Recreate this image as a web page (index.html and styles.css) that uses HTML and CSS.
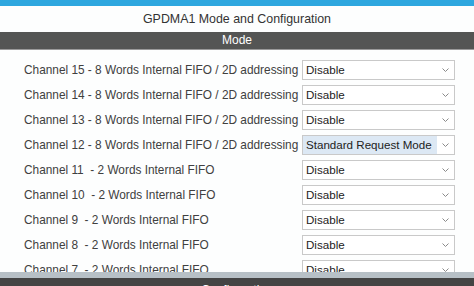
FILE: index.html
```html
<!DOCTYPE html>
<html lang="en">
<head>
    <meta charset="UTF-8">
    <meta name="viewport" content="width=device-width, initial-scale=1.0">
    <title>GPDMA1 Mode and Configuration</title>
    <link rel="stylesheet" href="styles.css">
</head>
<body>
    <div class="topbar"></div>
    <div class="title">GPDMA1 Mode and Configuration</div>
    <div class="section">Mode</div>

    <div class="rows">
        <div class="row">
            <span class="label">Channel 15 - 8 Words Internal FIFO / 2D addressing</span>
            <div class="select"><span class="value">Disable</span><svg class="chev" viewBox="0 0 7 4"><path d="M0.5 0.5 L3.5 3.5 L6.5 0.5"/></svg></div>
        </div>
        <div class="row">
            <span class="label">Channel 14 - 8 Words Internal FIFO / 2D addressing</span>
            <div class="select"><span class="value">Disable</span><svg class="chev" viewBox="0 0 7 4"><path d="M0.5 0.5 L3.5 3.5 L6.5 0.5"/></svg></div>
        </div>
        <div class="row">
            <span class="label">Channel 13 - 8 Words Internal FIFO / 2D addressing</span>
            <div class="select"><span class="value">Disable</span><svg class="chev" viewBox="0 0 7 4"><path d="M0.5 0.5 L3.5 3.5 L6.5 0.5"/></svg></div>
        </div>
        <div class="row">
            <span class="label">Channel 12 - 8 Words Internal FIFO / 2D addressing</span>
            <div class="select active"><span class="value">Standard Request Mode</span><svg class="chev" viewBox="0 0 7 4"><path d="M0.5 0.5 L3.5 3.5 L6.5 0.5"/></svg></div>
        </div>
        <div class="row">
            <span class="label">Channel 11&nbsp; - 2 Words Internal FIFO</span>
            <div class="select"><span class="value">Disable</span><svg class="chev" viewBox="0 0 7 4"><path d="M0.5 0.5 L3.5 3.5 L6.5 0.5"/></svg></div>
        </div>
        <div class="row">
            <span class="label">Channel 10&nbsp; - 2 Words Internal FIFO</span>
            <div class="select"><span class="value">Disable</span><svg class="chev" viewBox="0 0 7 4"><path d="M0.5 0.5 L3.5 3.5 L6.5 0.5"/></svg></div>
        </div>
        <div class="row">
            <span class="label">Channel 9&nbsp; - 2 Words Internal FIFO</span>
            <div class="select"><span class="value">Disable</span><svg class="chev" viewBox="0 0 7 4"><path d="M0.5 0.5 L3.5 3.5 L6.5 0.5"/></svg></div>
        </div>
        <div class="row">
            <span class="label">Channel 8&nbsp; - 2 Words Internal FIFO</span>
            <div class="select"><span class="value">Disable</span><svg class="chev" viewBox="0 0 7 4"><path d="M0.5 0.5 L3.5 3.5 L6.5 0.5"/></svg></div>
        </div>
        <div class="row">
            <span class="label">Channel 7&nbsp; - 2 Words Internal FIFO</span>
            <div class="select"><span class="value">Disable</span><svg class="chev" viewBox="0 0 7 4"><path d="M0.5 0.5 L3.5 3.5 L6.5 0.5"/></svg></div>
        </div>
    </div>

    <div class="footer">
        <div class="divider"></div>
        <div class="section">Configuration</div>
    </div>
</body>
</html>
```

FILE: styles.css
```css
body {
    margin: 0;
    width: 474px;
    height: 286px;
    overflow: hidden;
    position: relative;
    font-family: "Liberation Sans", Arial, sans-serif;
    background-color: #fdfefe;
    color: #3a3a3a;
}
.topbar {
    height: 6px;
    background-color: #2ea7df;
}
.title {
    height: 26px;
    line-height: 26px;
    text-align: center;
    font-size: 12.4px;
    color: #333;
}
.section {
    height: 17px;
    line-height: 17px;
    text-align: center;
    font-size: 12px;
    color: #fff;
    background-color: #545554;
    border-bottom: 1px solid #9a9a9a;
}
.rows {
    padding: 7px 0 0 24px;
}
.row {
    display: flex;
    align-items: center;
    height: 25px;
}
.label {
    width: 278px;
    font-size: 11.85px;
    white-space: nowrap;
    color: #404040;
}
.select {
    display: flex;
    align-items: center;
    width: 153px;
    height: 20px;
    box-sizing: border-box;
    border: 1px solid #c9c9c9;
    background-color: #fff;
    font-size: 11.6px;
    color: #222;
}
.value {
    flex: 1;
    height: 100%;
    line-height: 18px;
    padding-left: 3px;
    white-space: nowrap;
    overflow: hidden;
}
.select.active .value {
    background-color: #dce8f4;
}
.chev {
    width: 7px;
    height: 4px;
    margin: 0 5px 0 5px;
    fill: none;
    stroke: #8a8a8a;
    stroke-width: 1;
}
.footer {
    position: absolute;
    left: 0;
    right: 0;
    top: 272px;
}
.divider {
    height: 6px;
    background-color: #b7c0c6;
}
.footer .section {
    padding-top: 4px;
    background-color: #444;
    border-bottom: none;
}
```
